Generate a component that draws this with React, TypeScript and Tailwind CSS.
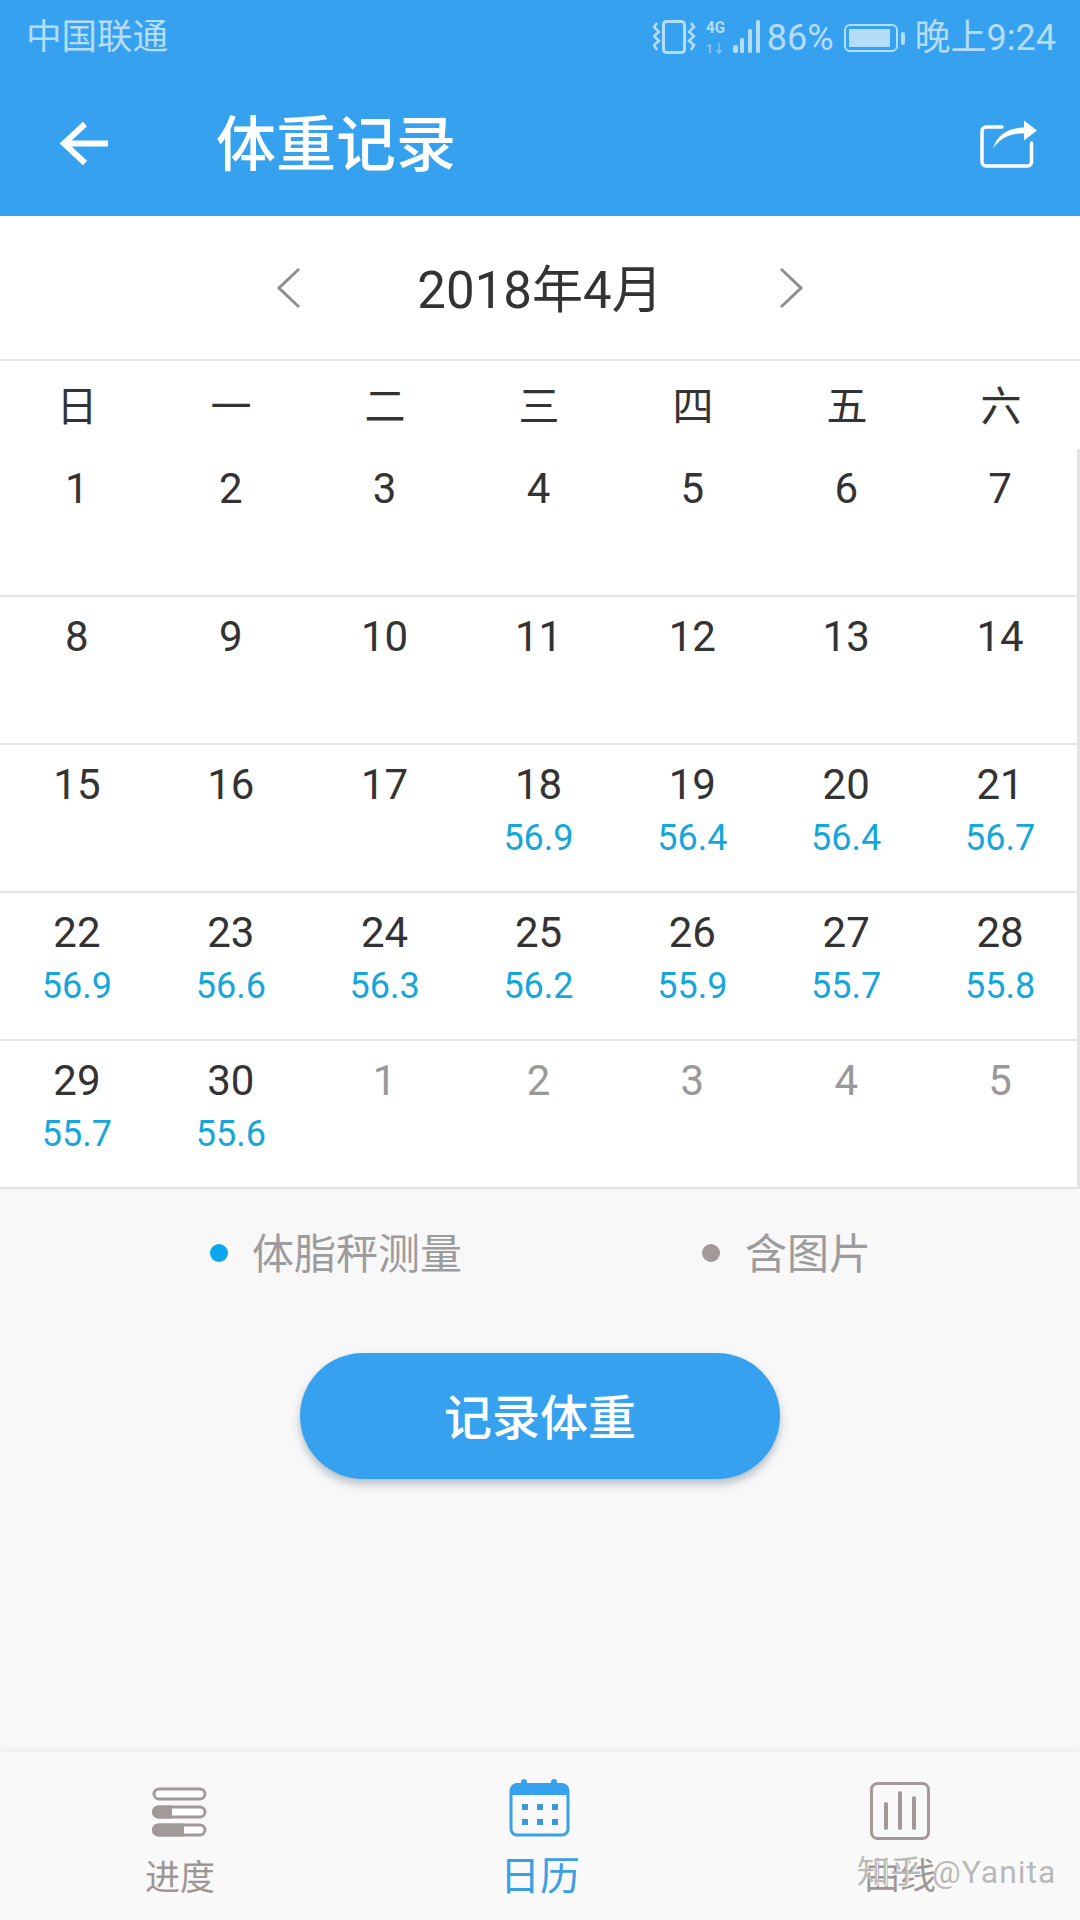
const weekdays = ['日', '一', '二', '三', '四', '五', '六'];

type Day = { d: number; w?: string; muted?: boolean };

const rows: Day[][] = [
  [{ d: 1 }, { d: 2 }, { d: 3 }, { d: 4 }, { d: 5 }, { d: 6 }, { d: 7 }],
  [{ d: 8 }, { d: 9 }, { d: 10 }, { d: 11 }, { d: 12 }, { d: 13 }, { d: 14 }],
  [
    { d: 15 },
    { d: 16 },
    { d: 17 },
    { d: 18, w: '56.9' },
    { d: 19, w: '56.4' },
    { d: 20, w: '56.4' },
    { d: 21, w: '56.7' },
  ],
  [
    { d: 22, w: '56.9' },
    { d: 23, w: '56.6' },
    { d: 24, w: '56.3' },
    { d: 25, w: '56.2' },
    { d: 26, w: '55.9' },
    { d: 27, w: '55.7' },
    { d: 28, w: '55.8' },
  ],
  [
    { d: 29, w: '55.7' },
    { d: 30, w: '55.6' },
    { d: 1, muted: true },
    { d: 2, muted: true },
    { d: 3, muted: true },
    { d: 4, muted: true },
    { d: 5, muted: true },
  ],
];

function StatusIcons() {
  return (
    <svg width="110" height="40" viewBox="0 0 110 40" fill="none">
      {/* vibrate */}
      <path d="M4 5 L1 9 L6 14 L1 18 L6 23 L1 27 L4 32" stroke="#b5dcf8" strokeWidth="2.5" />
      <rect x="10.5" y="3.5" width="21" height="31" rx="3" stroke="#b5dcf8" strokeWidth="3" />
      <path d="M38 5 L41 9 L36 14 L41 18 L36 23 L41 27 L38 32" stroke="#b5dcf8" strokeWidth="2.5" />
      {/* 4G */}
      <text x="53" y="15" fontSize="16" fontWeight="700" fill="#b5dcf8" textLength="19" lengthAdjust="spacingAndGlyphs">
        4G
      </text>
      <text x="53" y="35" fontSize="12" fontWeight="700" fill="#8cc8f3">
        1↓
      </text>
      {/* signal */}
      <rect x="80" y="27" width="5" height="8" rx="2.5" fill="#b5dcf8" />
      <rect x="87" y="20" width="4" height="15" rx="1.5" fill="#b5dcf8" />
      <rect x="95" y="11" width="4" height="24" rx="1.5" fill="#b5dcf8" />
      <rect x="103" y="2" width="4" height="33" rx="1.5" fill="#b5dcf8" />
    </svg>
  );
}

function BatteryIcon() {
  return (
    <svg width="62" height="30" viewBox="0 0 62 30" fill="none">
      <rect x="1" y="2" width="52" height="26" rx="5" stroke="#b5dcf8" strokeWidth="2" />
      <rect x="5" y="6" width="41" height="18" rx="1" fill="#b5dcf8" />
      <rect x="57" y="9" width="4" height="13" rx="2" fill="#b5dcf8" />
    </svg>
  );
}

function ProgressIcon() {
  return (
    <svg width="56" height="50" viewBox="0 0 56 50" fill="none">
      <rect x="2" y="2" width="51" height="10" rx="5" fill="#fff" stroke="#a29a98" strokeWidth="3" />
      <rect x="2" y="20" width="51" height="10" rx="5" fill="#fff" stroke="#a29a98" strokeWidth="3" />
      <path d="M6 18.5 h14 v13 h-14 a6 6 0 0 1 -6 -6 v-1 a6 6 0 0 1 6 -6z" fill="#a29a98" />
      <rect x="2" y="38" width="51" height="10" rx="5" fill="#fff" stroke="#a29a98" strokeWidth="3" />
      <path d="M6 36.5 h26 v13 h-26 a6 6 0 0 1 -6 -6 v-1 a6 6 0 0 1 6 -6z" fill="#a29a98" />
    </svg>
  );
}

function CalendarIcon() {
  return (
    <svg width="62" height="60" viewBox="0 0 62 60" fill="none">
      <rect x="2" y="7" width="57" height="50" rx="6" fill="#f9f9f9" stroke="#3ca0e6" strokeWidth="3" />
      <path d="M1 17 v-5 a7 7 0 0 1 7 -7 h45 a7 7 0 0 1 7 7 v5z" fill="#36a2ef" />
      <rect x="12" y="1" width="6" height="9" rx="3" fill="#36a2ef" />
      <rect x="42" y="1" width="6" height="9" rx="3" fill="#36a2ef" />
      {[13, 28, 43].map((x) => (
        <rect key={x} x={x} y="26" width="6" height="6" fill="#3d98d8" />
      ))}
      {[13, 28, 43].map((x) => (
        <rect key={x} x={x} y="41" width="6" height="6" fill="#3d98d8" />
      ))}
    </svg>
  );
}

function ChartIcon() {
  return (
    <svg width="60" height="58" viewBox="0 0 60 58" fill="none">
      <rect x="1.5" y="1.5" width="57" height="55" rx="6" stroke="#a29a98" strokeWidth="3" />
      <rect x="14" y="20" width="4" height="28" rx="2" fill="#a29a98" />
      <rect x="28" y="9" width="4" height="39" rx="2" fill="#a29a98" />
      <rect x="42" y="14" width="4" height="34" rx="2" fill="#a29a98" />
    </svg>
  );
}

export default function App() {
  return (
    <div className="flex h-[1920px] w-[1080px] flex-col overflow-hidden bg-[#f8f8f8] font-['Roboto','Noto_Sans_CJK_SC',sans-serif]">
      {/* Header bleu */}
      <header className="h-[216px] shrink-0 bg-[#36a2ef]">
        <div className="flex h-[75px] items-center justify-between pl-[26px] pr-[24px] text-[#b5dcf8]">
          <span className="text-[35.5px] leading-none">中国联通</span>
          <div className="flex items-center gap-[4px]">
            <StatusIcons />
            <span className="text-[36px] leading-none">86%</span>
            <div className="ml-[6px]">
              <BatteryIcon />
            </div>
            <span className="ml-[5px] text-[36px] leading-none">晚上9:24</span>
          </div>
        </div>
        <div className="flex h-[141px] items-center pl-[58px] pr-[42px]">
          <svg width="52" height="52" viewBox="0 0 52 52" fill="none" stroke="#fff" strokeWidth="6">
            <path d="M27 4 L6 23.5 L27 43" />
            <path d="M7 23.5 H50" />
          </svg>
          <h1 className="ml-[106px] flex-1 text-[60px] leading-none font-medium text-white">体重记录</h1>
          <svg width="60" height="52" viewBox="0 0 60 52" fill="none">
            <path
              d="M24 7 H8 a4 4 0 0 0 -4 4 V42 a4 4 0 0 0 4 4 H49.5 a4 4 0 0 0 4 -4 V23"
              stroke="#fff"
              strokeWidth="3.5"
              strokeLinecap="round"
            />
            <path d="M15 28.5 C19 15 30 8 46 7.5 V0.5 L59 10.5 L46 20.5 V13.5 C32 13 22 18 15 28.5z" fill="#fff" />
          </svg>
        </div>
      </header>

      {/* Calendrier */}
      <section className="shrink-0 bg-white">
        <div className="flex h-[145px] items-center justify-center border-b-2 border-[#e4e4e4]">
          <svg width="26" height="42" viewBox="0 0 26 42" fill="none" stroke="#8e8e8e" strokeWidth="3">
            <path d="M23 2 L3 21 L23 40" />
          </svg>
          <span className="w-[476px] pt-[6px] text-center text-[51px] leading-none text-[#333]">2018年4月</span>
          <svg width="26" height="42" viewBox="0 0 26 42" fill="none" stroke="#8e8e8e" strokeWidth="3">
            <path d="M3 2 L23 21 L3 40" />
          </svg>
        </div>
        <div className="grid h-[88px] grid-cols-7 items-center pr-[2px]">
          {weekdays.map((w) => (
            <div key={w} className="pt-[4px] text-center text-[41px] leading-none text-[#333]">
              {w}
            </div>
          ))}
        </div>
        <div className="border-r-[3px] border-[#e4e4e4]">
          {rows.map((row, i) => (
            <div key={i} className="grid h-[148px] grid-cols-7 border-b-2 border-[#e4e4e4]">
              {row.map((c, j) => (
                <div key={j} className="flex flex-col items-center pt-[16px]">
                  <span className={`text-[42px] leading-[48px] ${c.muted ? 'text-[#999]' : 'text-[#333]'}`}>{c.d}</span>
                  {c.w && <span className="mt-[8px] text-[36px] leading-[42px] text-[#16a6dc]">{c.w}</span>}
                </div>
              ))}
            </div>
          ))}
        </div>
      </section>

      {/* Légende */}
      <div className="mt-[41px] flex h-[50px] shrink-0 items-center pl-[210px]">
        <span className="mb-[4px] h-[18px] w-[18px] rounded-full bg-[#0aa6ee]" />
        <span className="ml-[24px] w-[450px] text-[42px] leading-none text-[#9c9c9c]">体脂秤测量</span>
        <span className="mb-[4px] h-[18px] w-[18px] rounded-full bg-[#a29a98]" />
        <span className="ml-[25px] text-[42px] leading-none text-[#9c9c9c]">含图片</span>
      </div>

      {/* Bouton */}
      <div className="mt-[73px] flex shrink-0 justify-center">
        <button className="h-[126px] w-[480px] rounded-full bg-[#36a2ef] pt-[6px] text-[48px] font-medium text-white shadow-[0_5px_8px_rgba(60,80,110,0.35)]">
          记录体重
        </button>
      </div>

      {/* Barre du bas */}
      <nav className="relative mt-auto grid h-[168px] shrink-0 grid-cols-[360px_360px_360px] bg-[#f9f9f9] shadow-[0_-2px_5px_rgba(0,0,0,0.05)]">
        <div className="flex flex-col items-center pt-[35px]">
          <ProgressIcon />
          <span className="mt-[24px] text-[35px] leading-none text-[#9c9795]">进度</span>
        </div>
        <div className="flex flex-col items-center pt-[26px]">
          <CalendarIcon />
          <span className="mt-[19px] text-[40px] leading-none text-[#3c9fe2]">日历</span>
        </div>
        <div className="flex flex-col items-center pt-[30px]">
          <ChartIcon />
          <span className="mt-[19px] text-[36px] leading-none text-[#9c9795]">曲线</span>
        </div>
        {/* Filigrane */}
        <span className="absolute left-[857px] top-[104px] text-[32px] leading-none tracking-[1px] text-[#b9b9b9] [text-shadow:1px_1px_0_#ffffff]">
          知乎 @Yanita
        </span>
      </nav>
    </div>
  );
}
